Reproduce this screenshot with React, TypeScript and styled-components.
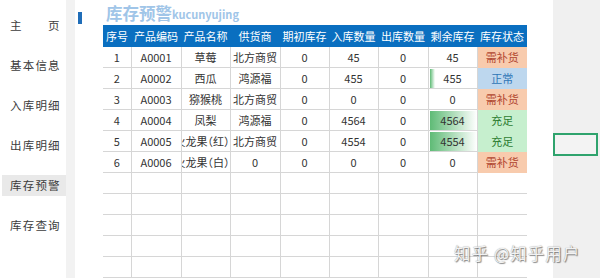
import React from 'react';
import styled, { createGlobalStyle } from 'styled-components';

const GlobalStyle = createGlobalStyle`
  html, body {
    margin: 0;
    padding: 0;
    background: #ffffff;
  }
  body {
    font-family: 'Noto Sans CJK SC', 'Noto Sans', sans-serif;
  }
`;

const StyledPage = styled.div`
  position: relative;
  width: 600px;
  height: 278px;
  overflow: hidden;
  display: flex;
`;

const StyledSidebar = styled.nav`
  width: 64px;
  padding: 15px 0 0 2px;
  display: flex;
  flex-direction: column;
  gap: 19px;
  background: #ffffff;
`;

const StyledNavItem = styled.div<{ $active?: boolean }>`
  height: 21px;
  line-height: 21px;
  padding-left: 8px;
  font-size: 11.5px;
  letter-spacing: 1.2px;
  color: #3c3c3c;
  white-space: pre;
  background: ${(p) => (p.$active ? '#e9e9e9' : 'transparent')};
`;

const StyledStrip = styled.div`
  width: 9px;
  background: #f2f2f2;
`;

const StyledMain = styled.main`
  width: 478px;
  display: flex;
  padding-left: 3px;
  box-sizing: border-box;
`;

const StyledMarker = styled.div`
  width: 4px;
  height: 12px;
  margin-top: 12px;
  margin-right: 21px;
  background: #1f6db8;
`;

const StyledContent = styled.div`
  display: flex;
  flex-direction: column;
`;

const StyledTitle = styled.h1`
  margin: 0;
  height: 28px;
  padding-left: 3px;
  display: flex;
  align-items: flex-end;
  color: #a0c5e8;
  font-weight: bold;
  font-size: 16.5px;
  line-height: 1;
  padding-bottom: 4px;
  box-sizing: border-box;
`;

const StyledSubTitle = styled.span`
  font-size: 11px;
  font-weight: bold;
  margin-bottom: 1px;
`;

const StyledTable = styled.table`
  border-collapse: collapse;
  table-layout: fixed;
  width: 424px;
  font-size: 11px;
  color: #333333;
`;

const StyledHeadCell = styled.th`
  height: 22px;
  padding: 0;
  background: #0a6fc0;
  color: #ffffff;
  font-weight: normal;
  text-align: center;
  white-space: nowrap;
`;

const StyledCell = styled.td`
  height: 20px;
  padding: 0;
  border: 1px solid #d6d6d6;
  border-top: none;
  text-align: center;
  white-space: nowrap;
  overflow: hidden;
  &:first-child {
    border-left: none;
  }
`;

// long names overflow the cell the way a spreadsheet clips them
const StyledClip = styled.div`
  display: flex;
  justify-content: flex-end;
  overflow: hidden;
  white-space: nowrap;
  font-feature-settings: 'halt';
`;

const StyledBarCell = styled(StyledCell)`
  background-image: linear-gradient(to right, #5fbb76, #ffffff);
  background-repeat: no-repeat;
  background-position: 1px 1px;
`;

const statusColors: Record<string, { bg: string; fg: string }> = {
  需补货: { bg: '#f8cbad', fg: '#b0452f' },
  正常: { bg: '#bdd7ee', fg: '#2e75b6' },
  充足: { bg: '#c6efce', fg: '#2e7d32' },
};

const StyledStatusCell = styled.td<{ $status?: string }>`
  height: 20px;
  padding: 0;
  text-align: center;
  border-bottom: 1px solid
    ${(p) => (p.$status ? statusColors[p.$status].bg : '#d6d6d6')};
  background: ${(p) => (p.$status ? statusColors[p.$status].bg : 'transparent')};
  color: ${(p) => (p.$status ? statusColors[p.$status].fg : '#333')};
`;

const StyledRightPanel = styled.aside`
  flex: 1;
  background: #f0f0f0;
  display: flex;
  flex-direction: column;
`;

const StyledSelection = styled.div`
  margin-top: 133px;
  width: 45px;
  height: 23px;
  box-sizing: border-box;
  border: 2px solid #2fa36d;
  background: #f3f3f3;
`;

const StyledWatermark = styled.div`
  position: absolute;
  left: 454px;
  top: 241px;
  font-size: 16.5px;
  letter-spacing: 1px;
  color: #f2f2f2;
  text-shadow: 1px 1px 1px rgba(0, 0, 0, 0.45), 0 0 1px rgba(0, 0, 0, 0.4);
  white-space: nowrap;
`;

const NAV = ['主　　页', '基本信息', '入库明细', '出库明细', '库存预警', '库存查询'];

const HEADERS = ['序号', '产品编码', '产品名称', '供货商', '期初库存', '入库数量', '出库数量', '剩余库存', '库存状态'];
const WIDTHS = [28, 50, 49, 50, 49, 49, 50, 49, 50];

type Row = {
  id: number;
  code: string;
  name: string;
  supplier: string;
  start: number;
  inQty: number;
  outQty: number;
  left: number;
  status: string;
};

const ROWS: Row[] = [
  { id: 1, code: 'A0001', name: '草莓', supplier: '北方商贸', start: 0, inQty: 45, outQty: 0, left: 45, status: '需补货' },
  { id: 2, code: 'A0002', name: '西瓜', supplier: '鸿源福', start: 0, inQty: 455, outQty: 0, left: 455, status: '正常' },
  { id: 3, code: 'A0003', name: '猕猴桃', supplier: '北方商贸', start: 0, inQty: 0, outQty: 0, left: 0, status: '需补货' },
  { id: 4, code: 'A0004', name: '凤梨', supplier: '鸿源福', start: 0, inQty: 4564, outQty: 0, left: 4564, status: '充足' },
  { id: 5, code: 'A0005', name: '火龙果（红）', supplier: '北方商贸', start: 0, inQty: 4554, outQty: 0, left: 4554, status: '充足' },
  { id: 6, code: 'A0006', name: '火龙果（白）', supplier: '0', start: 0, inQty: 0, outQty: 0, left: 0, status: '需补货' },
];

const MAX_LEFT = Math.max(...ROWS.map((r) => r.left));

const App = () => {
  return (
    <StyledPage>
      <GlobalStyle />
      <StyledSidebar>
        {NAV.map((item) => (
          <StyledNavItem key={item} $active={item === '库存预警'}>
            {item}
          </StyledNavItem>
        ))}
      </StyledSidebar>
      <StyledStrip />
      <StyledMain>
        <StyledMarker />
        <StyledContent>
          <StyledTitle>
            库存预警<StyledSubTitle>kucunyujing</StyledSubTitle>
          </StyledTitle>
          <StyledTable>
            <colgroup>
              {WIDTHS.map((w, i) => (
                <col key={i} style={{ width: w }} />
              ))}
            </colgroup>
            <thead>
              <tr>
                {HEADERS.map((h) => (
                  <StyledHeadCell key={h}>{h}</StyledHeadCell>
                ))}
              </tr>
            </thead>
            <tbody>
              {ROWS.map((r) => (
                <tr key={r.id}>
                  <StyledCell>{r.id}</StyledCell>
                  <StyledCell>{r.code}</StyledCell>
                  <StyledCell>
                    {r.name.length > 4 ? <StyledClip>{r.name}</StyledClip> : r.name}
                  </StyledCell>
                  <StyledCell>{r.supplier}</StyledCell>
                  <StyledCell>{r.start}</StyledCell>
                  <StyledCell>{r.inQty}</StyledCell>
                  <StyledCell>{r.outQty}</StyledCell>
                  <StyledBarCell
                    style={{ backgroundSize: `${Math.round((r.left / MAX_LEFT) * 47)}px 19px` }}
                  >
                    {r.left}
                  </StyledBarCell>
                  <StyledStatusCell $status={r.status}>{r.status}</StyledStatusCell>
                </tr>
              ))}
              {[0, 1, 2, 3, 4].map((i) => (
                <tr key={`empty-${i}`}>
                  {WIDTHS.slice(0, 8).map((_, j) => (
                    <StyledCell key={j} />
                  ))}
                  <StyledStatusCell />
                </tr>
              ))}
            </tbody>
          </StyledTable>
        </StyledContent>
      </StyledMain>
      <StyledRightPanel>
        <StyledSelection />
      </StyledRightPanel>
      <StyledWatermark>知乎 @知乎用户</StyledWatermark>
    </StyledPage>
  );
};

export default App;
